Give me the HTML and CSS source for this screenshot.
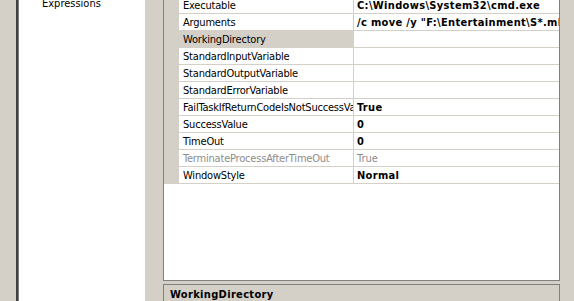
FILE: index.html
```html
<!DOCTYPE html>
<html>
<head>
<meta charset="utf-8">
<link rel="stylesheet" href="styles.css">
</head>
<body>
<div class="app">
  <div class="gutter"></div>
  <div class="tree">
    <div class="node">Expressions</div>
  </div>
  <div class="split"></div>
  <div class="main">
    <div class="grid">
      <div class="rows">
        <div class="row"><div class="margin"></div><div class="label">Executable</div><div class="value bold">C:\Windows\System32\cmd.exe</div></div>
        <div class="row"><div class="margin"></div><div class="label">Arguments</div><div class="value bold">/c move /y "F:\Entertainment\S*.mkv" "F:\Entertainment\Series"</div></div>
        <div class="row"><div class="margin"></div><div class="label selected">WorkingDirectory</div><div class="value"></div></div>
        <div class="row"><div class="margin"></div><div class="label">StandardInputVariable</div><div class="value"></div></div>
        <div class="row"><div class="margin"></div><div class="label">StandardOutputVariable</div><div class="value"></div></div>
        <div class="row"><div class="margin"></div><div class="label">StandardErrorVariable</div><div class="value"></div></div>
        <div class="row"><div class="margin"></div><div class="label">FailTaskIfReturnCodeIsNotSuccessValue</div><div class="value bold">True</div></div>
        <div class="row"><div class="margin"></div><div class="label">SuccessValue</div><div class="value bold">0</div></div>
        <div class="row"><div class="margin"></div><div class="label">TimeOut</div><div class="value bold">0</div></div>
        <div class="row disabled"><div class="margin"></div><div class="label">TerminateProcessAfterTimeOut</div><div class="value">True</div></div>
        <div class="row"><div class="margin"></div><div class="label">WindowStyle</div><div class="value bold">Normal</div></div>
      </div>
    </div>
    <div class="desc">
      <div class="desc-title">WorkingDirectory</div>
    </div>
  </div>
  <div class="rightgap"></div>
</div>
</body>
</html>
```
FILE: styles.css
```css
html, body {
  margin: 0;
  padding: 0;
}
body {
  width: 574px;
  height: 301px;
  overflow: hidden;
  background: #d4d0c8;
  font-family: "DejaVu Sans Condensed", "DejaVu Sans", sans-serif;
  font-size: 11px;
  color: #000;
}
.app {
  display: flex;
  height: 301px;
}
.gutter {
  width: 16px;
  flex: none;
}
.tree {
  width: 126px;
  flex: none;
  background: #fff;
  border-left: 2px solid #404040;
  box-shadow: inset 1px 0 0 #808080;
  padding-left: 1px;
  overflow: hidden;
}
.node {
  margin-top: -3px;
  padding-left: 23px;
  line-height: 14px;
  white-space: nowrap;
}
.split {
  width: 18px;
  flex: none;
}
.main {
  width: 397px;
  flex: none;
  display: flex;
  flex-direction: column;
  gap: 3px;
}
.grid {
  height: 280px;
  flex: none;
  background: #fff;
  border: 1px solid #808080;
  border-top: none;
  overflow: hidden;
}
.rows {
  margin-top: -3px;
}
.row {
  display: flex;
  height: 17px;
}
.margin {
  width: 15px;
  flex: none;
  background: #d4d0c8;
}
.label {
  width: 170px;
  flex: none;
  padding: 1px 0 0 4px;
  border-right: 1px solid #d4d0c8;
  border-bottom: 1px solid #d4d0c8;
  line-height: 15px;
  letter-spacing: -0.2px;
  white-space: nowrap;
  overflow: hidden;
}
.label.selected {
  background: #d4d0c8;
}
.value {
  flex: 1;
  padding: 1px 0 0 3px;
  border-bottom: 1px solid #d4d0c8;
  line-height: 15px;
  white-space: nowrap;
  overflow: hidden;
}
.bold {
  font-weight: bold;
  letter-spacing: 0.33px;
}
.disabled .label,
.disabled .value {
  color: #8c8c8c;
}
.desc {
  flex: 1;
  border: 1px solid #808080;
  border-bottom: none;
  background: #d4d0c8;
}
.desc-title {
  padding: 3px 0 0 6px;
  font-weight: bold;
  letter-spacing: 0.33px;
  line-height: 14px;
}
.rightgap {
  width: 14px;
  flex: none;
}
```
